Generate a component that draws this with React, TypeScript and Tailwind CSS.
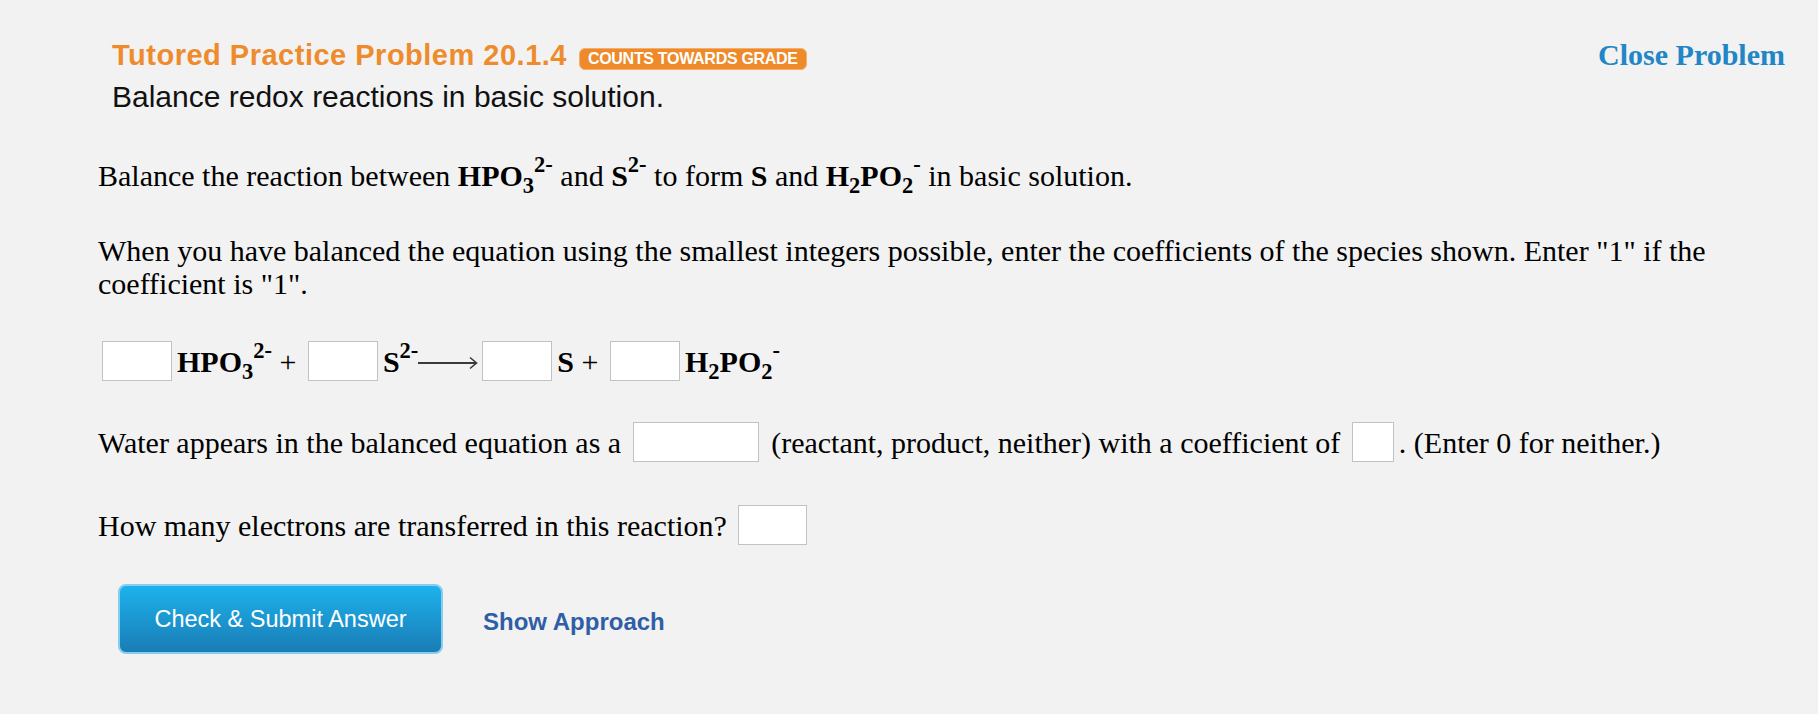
import React from 'react';

const sans = "font-['Liberation_Sans',Arial,sans-serif]";
const serif = "font-['Liberation_Serif','Times_New_Roman',serif]";

const Blank = ({ w = 'w-[70px]' }: { w?: string }) => (
  <input
    type="text"
    className={`${w} h-[40px] shrink-0 ml-[4px] mr-[5px] bg-white border border-[#c2c2c2] outline-none px-1 text-[24px]`}
  />
);

const Sub = ({ children }: { children: React.ReactNode }) => (
  <sub className="text-[75%] bottom-[-0.32em]">{children}</sub>
);

const Sup = ({ children }: { children: React.ReactNode }) => (
  <sup className="text-[75%] top-[-0.62em]">{children}</sup>
);

const Arrow = () => (
  <svg width="60" height="16" viewBox="0 0 60 16" className="shrink-0 mt-[4px]">
    <line x1="0" y1="8" x2="58" y2="8" stroke="#3a3a3a" strokeWidth="2" />
    <polyline points="52,2.5 58.5,8 52,13.5" fill="none" stroke="#3a3a3a" strokeWidth="1.6" />
  </svg>
);

export default function App() {
  return (
    <div className={`min-h-screen w-full bg-[#f2f2f2] text-black ${serif}`}>
      {/* header */}
      <header className="flex items-start justify-between pl-[112px] pr-[33px] pt-[38px]">
        <div>
          <div className="flex items-start">
            <h1 className={`${sans} text-[29px] leading-[34px] font-bold text-[#ee8b2c] tracking-[0.5px]`}>
              Tutored Practice Problem 20.1.4
            </h1>
            <span
              className={`${sans} ml-[12px] mt-[10px] h-[22px] px-[8px] flex items-center rounded-[6px] bg-[#ee8a2a] border border-[#f6ae68] text-white text-[16px] font-bold tracking-[-0.3px]`}
            >
              COUNTS TOWARDS GRADE
            </span>
          </div>
          <p className={`${sans} mt-[7px] text-[30px] leading-[36px] text-[#111]`}>
            Balance redox reactions in basic solution.
          </p>
        </div>
        <a href="#" className={`${serif} text-[30px] leading-[34px] font-bold text-[#2286c6]`}>
          Close Problem
        </a>
      </header>

      {/* problem body */}
      <main className="pl-[98px] pr-[33px] text-[30px] leading-[33px] pb-10">
        <p className="mt-[44px]">
          Balance the reaction between{' '}
          <b>
            HPO<Sub>3</Sub>
            <Sup>2-</Sup>
          </b>{' '}
          and{' '}
          <b>
            S<Sup>2-</Sup>
          </b>{' '}
          to form <b>S</b> and{' '}
          <b>
            H<Sub>2</Sub>PO<Sub>2</Sub>
            <Sup>-</Sup>
          </b>{' '}
          in basic solution.
        </p>

        <p className="mt-[42px]">
          When you have balanced the equation using the smallest integers possible, enter the coefficients of the
          species shown. Enter "1" if the coefficient is "1".
        </p>

        <div className="mt-[41px] flex items-center h-[40px] whitespace-pre">
          <Blank />
          <span className="font-bold">
            HPO<Sub>3</Sub>
            <Sup>2-</Sup>
          </span>
          <span> + </span>
          <Blank />
          <span className="font-bold">
            S<Sup>2-</Sup>
          </span>
          <Arrow />
          <Blank />
          <span className="font-bold">S</span>
          <span> + </span>
          <Blank />
          <span className="font-bold">
            H<Sub>2</Sub>PO<Sub>2</Sub>
            <Sup>-</Sup>
          </span>
        </div>

        <div className="mt-[41px] flex items-center h-[40px] whitespace-pre">
          <span>Water appears in the balanced equation as a </span>
          <Blank w="w-[126px]" />
          <span> (reactant, product, neither) with a coefficient of </span>
          <Blank w="w-[42px]" />
          <span>. (Enter 0 for neither.)</span>
        </div>

        <div className="mt-[43px] flex items-center h-[40px] whitespace-pre">
          <span>How many electrons are transferred in this reaction? </span>
          <Blank w="w-[69px]" />
        </div>

        <div className="mt-[39px] flex items-center">
          <button
            type="button"
            className={`${sans} ml-[20px] w-[325px] h-[70px] rounded-[8px] border-2 border-[#86cdef] bg-gradient-to-b from-[#1cb2ec] to-[#1a7db6] text-white text-[23.5px]`}
          >
            Check &amp; Submit Answer
          </button>
          <a href="#" className={`${sans} ml-[40px] mt-[4px] text-[24px] font-bold text-[#2f5ea6]`}>
            Show Approach
          </a>
        </div>
      </main>
    </div>
  );
}
